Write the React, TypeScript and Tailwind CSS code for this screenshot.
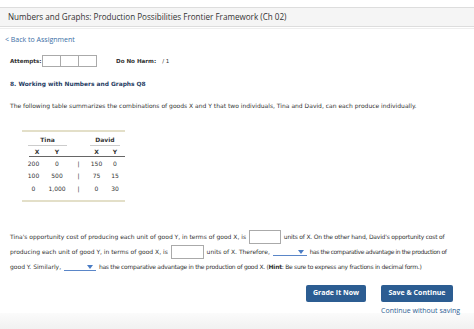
import type { ReactNode } from "react";

const body = { fontFamily: '"DejaVu Sans", Verdana, sans-serif' };
const ui = { fontFamily: '"Open Sans", "Liberation Sans", sans-serif' };

const ROWS = [
  ["200", "0", "150", "0"],
  ["100", "500", "75", "15"],
  ["0", "1,000", "0", "30"],
];

function Blank({ w }: { w: string }) {
  return <span className={`mx-[1px] inline-block h-[14px] border border-[#aaa] bg-white align-middle ${w}`} />;
}

function Pick({ w }: { w: string }) {
  return (
    <span className={`relative mx-[1px] inline-block h-[9px] border-b border-[#5a86c8] align-[-2px] ${w}`}>
      <span className="absolute right-[3px] top-[3px] h-0 w-0 border-x-[3.5px] border-t-[4px] border-x-transparent border-t-[#4a7cc4]" />
    </span>
  );
}

function Line({ children }: { children: ReactNode }) {
  return <div className="h-[15px] whitespace-nowrap leading-[15px]">{children}</div>;
}

export default function App() {
  return (
    <div className="relative h-[329px] w-[474px] overflow-hidden bg-white text-[#333]">
      <div className="h-[7px]" />
      <div style={ui} className="flex h-[20px] items-center border-y border-[#ddd] bg-[#f5f5f5] px-[8px] text-[8.1px] text-[#333]">
        Numbers and Graphs: Production Possibilities Frontier Framework (Ch 02)
      </div>
      <div className="h-[2px] border-b border-[#eee]" />

      <div style={ui} className="mt-[5px] flex h-[12px] items-center px-[5px] text-[7px] text-[#3a6ea5]">&lt; Back to Assignment</div>

      <div style={body} className="mt-[9px] flex h-[12px] items-center px-[10px] text-[5.6px]">
        <span className="w-[32px] font-bold">Attempts:</span>
        <div className="flex">
          {[0, 1, 2].map((i) => (
            <span key={i} className="-ml-px h-[12px] w-[19px] border border-[#aaa] first:ml-0" />
          ))}
        </div>
        <span className="ml-[19px] font-bold">Do No Harm:</span>
        <span className="ml-[6px]">/ 1</span>
      </div>

      <div style={body} className="mt-[11px] flex h-[12px] items-center px-[10px] text-[5.9px] font-bold text-[#1f3d63]">
        8. Working with Numbers and Graphs Q8
      </div>

      <div style={body} className="mt-[9px] flex h-[12px] items-center px-[10px] text-[6px]">
        The following table summarizes the combinations of goods X and Y that two individuals, Tina and David, can each produce individually.
      </div>

      <div style={body} className="ml-[22px] mt-[19px] w-[103px] text-[6px]">
        <div className="h-[2px] bg-[#e3dfc8]" />
        <div className="mt-[2px] flex h-[12px] font-bold">
          <div className="ml-[6px] flex w-[39px] items-center justify-center border-b border-[#ccc]">Tina</div>
          <div className="ml-[23px] flex w-[30px] items-center justify-center border-b border-[#ccc]">David</div>
        </div>
        <div className="ml-[7px] grid h-[11px] grid-cols-[16px_24px_19px_17px_20px] items-center border-b border-[#666] text-center font-bold">
          <span>X</span>
          <span>Y</span>
          <span />
          <span>X</span>
          <span>Y</span>
        </div>
        {ROWS.map((r, i) => (
          <div key={i} className="grid h-[12.5px] grid-cols-[23px_24px_19px_17px_20px] items-center text-center">
            <span>{r[0]}</span>
            <span>{r[1]}</span>
            <span>|</span>
            <span>{r[2]}</span>
            <span>{r[3]}</span>
          </div>
        ))}
        <div className="mt-[5px] h-[2px] bg-[#e3dfc8]" />
      </div>

      <div style={body} className="mt-[27px] px-[10px] text-[6px]">
        <Line>
          Tina's opportunity cost of producing each unit of good Y, in terms of good X, is <Blank w="w-[32px]" />{" "}
          <span className="tracking-[-0.2px]">units of X. On the other hand, David's opportunity cost of</span>
        </Line>
        <Line>
          producing each unit of good Y, in terms of good X, is <Blank w="w-[33px]" /> units of X. Therefore, <Pick w="w-[34px]" />{" "}
          <span className="tracking-[-0.4px]">has the comparative advantage in the production of</span>
        </Line>
        <Line>
          good Y. Similarly, <Pick w="w-[32px]" />{" "}
          <span className="tracking-[-0.27px]">
            has the comparative advantage in the production of good X. (<b>Hint</b>: Be sure to express any fractions in decimal form.)
          </span>
        </Line>
      </div>

      <div style={ui} className="mt-[11.5px] flex justify-end gap-[15px] pr-[21px] text-[7px] font-bold text-white">
        <button className="h-[17px] w-[60px] rounded-[2px] bg-[#2c5d92]">Grade It Now</button>
        <button className="h-[17px] w-[72px] rounded-[2px] bg-[#2c5d92]">Save &amp; Continue</button>
      </div>
      <div style={ui} className="relative z-10 mt-[3px] flex h-[12px] items-center justify-end pr-[14px] text-[7px] text-[#2c5d92]">
        Continue without saving
      </div>

      <div className="absolute bottom-0 left-0 h-[16px] w-full bg-gradient-to-b from-[#fbfbfb] to-[#f1f1f1]" />
    </div>
  );
}
